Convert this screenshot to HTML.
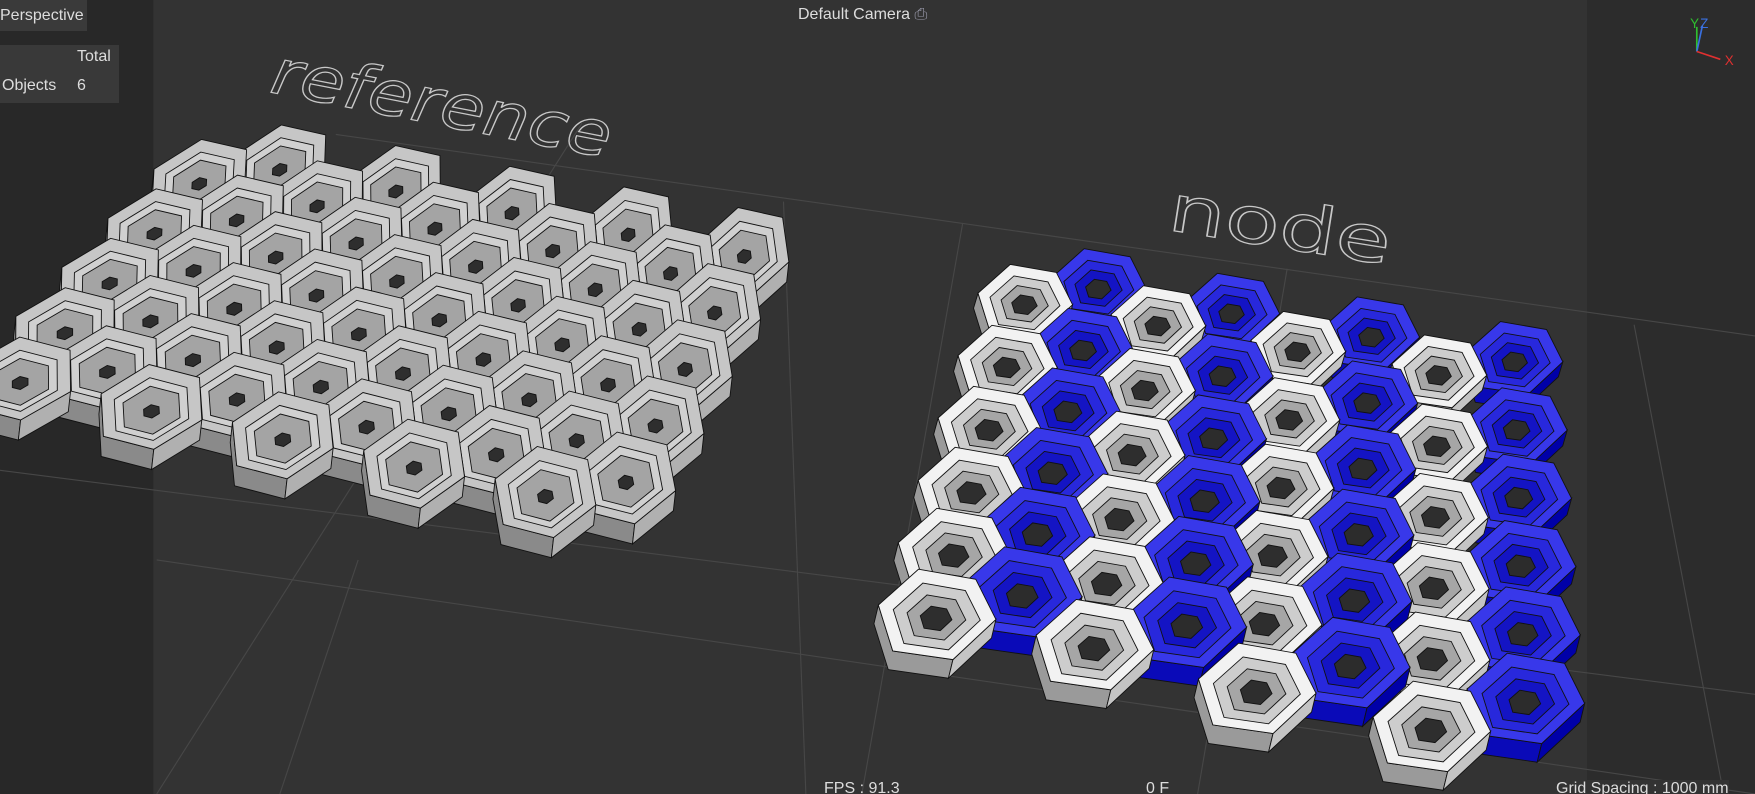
<!DOCTYPE html>
<html><head><meta charset="utf-8"><style>
html,body{margin:0;padding:0;background:#333;overflow:hidden}
#w{position:relative;width:1755px;height:794px;background:#333;overflow:hidden}
svg{position:absolute;left:0;top:0}
.t{position:absolute;font-family:"Liberation Sans",sans-serif;font-size:15px;color:#ddd}
</style></head><body><div id="w">
<svg id="s" width="1755" height="794" viewBox="0 0 1568 709" preserveAspectRatio="none">
<rect x="0" y="0" width="137" height="709" fill="#282828"/>
<rect x="1418" y="0" width="150" height="709" fill="#2c2c2c"/>
<g stroke="#474747" stroke-width="1" fill="none">
<line x1="0" y1="420" x2="1568" y2="620"/>
<line x1="140" y1="500" x2="1568" y2="709"/>
<line x1="300" y1="120" x2="1568" y2="300"/>
<line x1="700" y1="180" x2="720" y2="709"/>
<line x1="860" y1="200" x2="770" y2="709"/>
<line x1="1150" y1="240" x2="1070" y2="709"/>
<line x1="1460" y1="290" x2="1540" y2="709"/>
<line x1="320" y1="500" x2="250" y2="709"/>
<line x1="520" y1="110" x2="140" y2="709"/>
</g>
<text x="240" y="82" transform="rotate(11 240 82)" font-family="DejaVu Sans,sans-serif" font-style="italic" font-size="56" fill="none" stroke="#c8c8c8" stroke-width="1.1" textLength="308" lengthAdjust="spacingAndGlyphs">reference</text>
<text x="1042" y="205" transform="rotate(9 1042 205)" font-family="DejaVu Sans,sans-serif" font-size="58" fill="none" stroke="#c8c8c8" stroke-width="1.1" textLength="200" lengthAdjust="spacingAndGlyphs">node</text>
<g id="L"></g><g id="R"></g>
<g font-family="Liberation Sans,sans-serif" font-size="12">
<line x1="1516" y1="46" x2="1516" y2="24" stroke="#2fbf2f" stroke-width="1.5"/>
<line x1="1516" y1="46" x2="1521" y2="23" stroke="#3a70e0" stroke-width="1.5"/>
<line x1="1516" y1="46" x2="1537" y2="53" stroke="#e03030" stroke-width="1.5"/>
<text x="1510" y="25" fill="#2fbf2f">Y</text><text x="1519" y="25" fill="#3a70e0">Z</text><text x="1541" y="58" fill="#e03030">X</text>
</g>
</svg>
<div class="t" style="left:0;top:0;width:87px;height:31px;background:#3a3a3a;line-height:31px;font-size:16px">Perspective</div>
<div style="position:absolute;left:0;top:45px;width:119px;height:58px;background:#393939"></div>
<div class="t" style="left:77px;top:48px;font-size:16px">Total</div>
<div class="t" style="left:2px;top:77px;font-size:16px">Objects</div>
<div class="t" style="left:77px;top:77px;font-size:16px">6</div>
<div class="t" style="left:798px;top:6px;font-size:16px">Default Camera <span style="color:#99a">⎙</span></div>
<div class="t" style="left:824px;top:780px;font-size:16px">FPS : 91.3</div>
<div class="t" style="left:1146px;top:780px;font-size:16px">0 F</div>
<div class="t" style="left:1556px;top:780px;font-size:16px;background:#333">Grid Spacing : 1000 mm</div>
</div>
<script>
function P(pts){return pts.map(p=>p[0].toFixed(1)+','+p[1].toFixed(1)).join(' ');}
function poly(g,pts,fill,sw){g.insertAdjacentHTML('beforeend','<polygon points="'+P(pts)+'" fill="'+fill+'" stroke="#111" stroke-width="'+(sw||0.8)+'"/>');}
function sc(c,v,k,dx,dy,ky){ky=ky||1;return v.map(p=>[c[0]+p[0]*k+(dx||0),c[1]+p[1]*k*ky+(dy||0)]);}
var A=[198,140],B=[665,227],C=[18,340],D=[546,454];
function M(s,t){var x=s/4.5,y=(t+0.5)/4.5;
 return [A[0]*(1-x)*(1-y)+B[0]*x*(1-y)+C[0]*(1-x)*y+D[0]*x*y, A[1]*(1-x)*(1-y)+B[1]*x*(1-y)+C[1]*(1-x)*y+D[1]*x*y];}
var L=document.getElementById('L');var tiles=[];
for(var si=0;si<=9;si++)for(var ti=-1;ti<=8;ti++){var s=si/2,t=ti/2;if(Math.abs((s-t)-Math.round(s-t))>0.01)continue;
 if(s==0&&t==-0.5)continue; if(s==4.5&&t==4)continue;
 var c=M(s,t),u0=M(s+.5,t-.5),v0=M(s+.5,t+.5);
 var u=[u0[0]-c[0],u0[1]-c[1]],v=[v0[0]-c[0],v0[1]-c[1]];
 var h1=[(u[0]+v[0])/3,(u[1]+v[1])/3],h2=[(2*v[0]-u[0])/3,(2*v[1]-u[1])/3],h3=[(v[0]-2*u[0])/3,(v[1]-2*u[1])/3];
 var V=[h1,h2,h3,[-h1[0],-h1[1]],[-h2[0],-h2[1]],[-h3[0],-h3[1]]];
 tiles.push([c,V]);}
tiles.sort((p,q)=>p[0][1]-q[0][1]);
tiles.forEach(T=>{var c=[T[0][0],T[0][1]-2],V=T[1];
 var o=sc(c,V,1.15,0,0,1.2),d=sc(c,V,1.15,-2,18,1.2);
 poly(L,[o[1],o[2],o[3],d[3],d[2],d[1]],'#8a8a8a');
 poly(L,[o[0],o[1],d[1],d[0]],'#b0b0b0');
 poly(L,o,'#c6c6c6');
 poly(L,sc(c,V,0.85,0,2,1.2),'#d0d0d0');
 poly(L,sc(c,V,0.65,0,3,1.2),'#a4a4a4');
 poly(L,sc(c,V,0.18,0,4,1.2),'#2e2e2e');
});
var cols=[[[915,268],[836,548]],[[981,254],[913,528]],[[1034,287],[977,575]],[[1100,276],[1060,555]],[[1159,310],[1122,614]],[[1225,297],[1206,591]],[[1285,331],[1278,648]],[[1353,319],[1362,623]]];
var H=[[-12,-31],[28,-24],[42,4],[12,32],[-30,26],[-40,-6]];
var R=document.getElementById('R');var rt=[];
cols.forEach((cc,ci)=>{for(var r=0;r<6;r++){var t=r/5;
 rt.push([cc[0][0]+(cc[1][0]-cc[0][0])*t,cc[0][1]+(cc[1][1]-cc[0][1])*t,ci%2==1,1.03+r*0.05]);}});
rt.sort((p,q)=>p[1]-q[1]);
rt.forEach(T=>{var c=[T[0],T[1]],k=T[3],bl=T[2];
 var o=sc(c,H,k),d=sc(c,H,k,-4,13*k);
 var col=bl?['#0a0ab8','#3838ea','#2828dc','#1414c4','#2c2c2c','#0000a8']:['#9a9a9a','#f2f2f2','#cdcdcd','#a6a6a6','#2e2e2e','#c4c4c4'];
 poly(R,[o[3],o[4],o[5],d[5],d[4],d[3]],col[0]);
 poly(R,[o[2],o[3],d[3],d[2]],col[5]);
 poly(R,o,col[1]);
 poly(R,sc(c,H,0.74*k,0,2),col[2]);
 poly(R,sc(c,H,0.5*k,0,3),col[3]);
 poly(R,sc(c,H,0.27*k,0,4),col[4]);
});
</script>
</body></html>
